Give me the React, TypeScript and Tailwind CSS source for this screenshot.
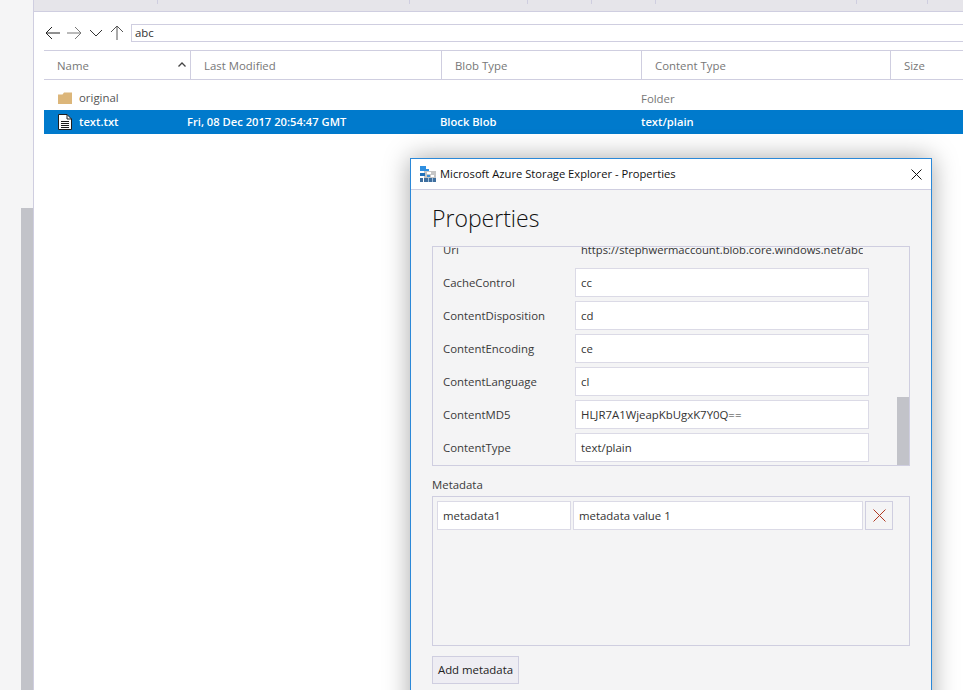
import React from 'react';

const headers = [
  { name: 'Name', width: 'w-[147px]', pad: 'pl-[13px]' },
  { name: 'Last Modified', width: 'w-[251px]', pad: 'pl-[13px]' },
  { name: 'Blob Type', width: 'w-[200px]', pad: 'pl-[13px]' },
  { name: 'Content Type', width: 'w-[249px]', pad: 'pl-[13px]' },
  { name: 'Size', width: 'flex-1', pad: 'pl-[13px]' },
];

const tabStops = ['w-[124px]', 'w-[252px]', 'w-[118px]', 'w-[64px]', 'w-[64px]', 'w-[201px]', 'w-[71px]'];

const props = [
  { label: 'CacheControl', value: 'cc' },
  { label: 'ContentDisposition', value: 'cd' },
  { label: 'ContentEncoding', value: 'ce' },
  { label: 'ContentLanguage', value: 'cl' },
  { label: 'ContentMD5', value: 'HLJR7A1WjeapKbUgxK7Y0Q==' },
  { label: 'ContentType', value: 'text/plain' },
];

const FolderIcon = () => (
  <svg width="14" height="12" viewBox="0 0 14 12">
    <path d="M0 2.5 L0 12 L14 12 L14 0.5 L6 0.5 L4.5 2.5 Z" fill="#dcb67a" />
  </svg>
);

const FileIcon = () => (
  <svg width="14" height="16" viewBox="0 0 14 16" fill="none">
    <path d="M1 .5 H9 L13.5 5 V15.5 H.5 V.5 Z" fill="#fff" stroke="#1e1e1e" />
    <path d="M9 .5 V5 H13.5" stroke="#1e1e1e" />
    <path d="M3 7.5 H11 M3 9.5 H11 M3 11.5 H11 M3 13.5 H11" stroke="#1e1e1e" />
  </svg>
);

const NavIcon = ({ d, color }: { d: string; color: string }) => (
  <svg width="16" height="16" viewBox="0 0 16 16" fill="none" stroke={color} strokeWidth="1">
    <path d={d} />
  </svg>
);

const AppLogo = () => (
  <svg width="16" height="16" viewBox="0 0 16 16">
    <rect x="0" y="0" width="6" height="3" fill="#2f8fe0" />
    <rect x="0" y="3" width="9" height="2" fill="#2f8fe0" />
    <rect x="4" y="5" width="12" height="7" fill="#c6c6c6" />
    <rect x="0" y="7" width="5" height="3" fill="#1f6fb8" />
    <rect x="7" y="6" width="4" height="2" fill="#ffffff" />
    <rect x="7" y="9" width="3" height="2" fill="#3d8fd6" />
    <rect x="11" y="9" width="3" height="2" fill="#ffffff" />
    <rect x="0" y="12" width="16" height="4" fill="#3f6f9f" />
    <rect x="3" y="12" width="1" height="4" fill="#ffffff" />
    <rect x="8" y="12" width="1" height="4" fill="#9fc0dd" />
    <rect x="12" y="12" width="1" height="4" fill="#9fc0dd" />
  </svg>
);

const PropRow = ({ label, value }: { label: string; value: string }) => (
  <div className="flex items-center h-[29px] mb-[4px]">
    <div className="w-[142px] pl-[10px] text-[#3a3a3a]">{label}</div>
    <div className="w-[294px] h-full bg-white border border-[#dbdae6] pl-[5px] flex items-center text-[#333]">{value}</div>
  </div>
);

const Modal = () => (
  <div className="absolute left-[410px] top-[158px] w-[522px] h-[560px] border border-[#2b88d8] bg-[#f4f4f5] shadow-[0_0_24px_rgba(0,0,0,0.35)]">
    <div className="h-[31px] bg-white border-b border-[#cfcee0] flex items-center pl-[9px] pr-[9px] text-[#111]">
      <AppLogo />
      <span className="ml-[4px] text-[11.2px]">Microsoft Azure Storage Explorer - Properties</span>
      <svg className="ml-auto" width="11" height="11" viewBox="0 0 11 11" fill="none" stroke="#111">
        <path d="M.5 .5 L10.5 10.5 M10.5 .5 L.5 10.5" />
      </svg>
    </div>
    <div className="px-[21px]">
      <div className="h-[56px] flex items-center text-[23px] font-light text-[#111]">Properties</div>
      <div className="h-[220px] border border-[#cfcee0] relative overflow-hidden">
        <div className="-mt-[12px]">
          <div className="flex items-center h-[29px] mb-[4px] pt-[1px]">
            <div className="w-[142px] pl-[10px] text-[#3a3a3a]">Uri</div>
            <div className="w-[288px] pl-[6px] overflow-hidden whitespace-nowrap text-[11.2px] text-[#333]">https://stephwermaccount.blob.core.windows.net/abc/text.txt</div>
          </div>
          {props.map((p) => (
            <PropRow key={p.label} label={p.label} value={p.value} />
          ))}
        </div>
        <div className="absolute right-0 bottom-0 w-[12px] h-[68px] bg-[#c2c3c9]" />
      </div>
      <div className="mt-[9px] mb-[1px] h-[20px] flex items-center text-[#3a3a3a]">Metadata</div>
      <div className="h-[150px] border border-[#cfcee0] p-[4px] flex gap-[2px]">
        <div className="w-[134px] h-[29px] bg-white border border-[#dbdae6] pl-[5px] flex items-center text-[#333]">metadata1</div>
        <div className="w-[290px] h-[29px] bg-white border border-[#dbdae6] pl-[5px] flex items-center text-[#333]">metadata value 1</div>
        <div className="w-[28px] h-[29px] border border-[#cfcee0] flex items-center justify-center">
          <svg width="13" height="13" viewBox="0 0 13 13" fill="none" stroke="#b03a22" strokeWidth="1">
            <path d="M.5 .5 L12.5 12.5 M12.5 .5 L.5 12.5" />
          </svg>
        </div>
      </div>
      <div className="mt-[10px] w-[87px] h-[28px] bg-[#eeedf3] border border-[#cfcee0] flex items-center justify-center text-[#222]">Add metadata</div>
    </div>
  </div>
);

export default function App() {
  return (
    <div className="relative w-[963px] h-[690px] overflow-hidden bg-white flex text-[11.4px] font-['Open_Sans',sans-serif]">
      {/* left rail */}
      <div className="w-[34px] h-full bg-[#f5f5f6] border-r border-[#cfcee0] flex justify-end">
        <div className="w-[12px] mt-[208px] bg-[#c2c3c9]" />
      </div>

      <div className="flex-1 min-w-0 flex flex-col">
        {/* tab strip */}
        <div className="h-[12px] bg-[#e6e5ea] border-b border-[#cfcee0] flex">
          {tabStops.map((w, i) => (
            <div key={i} className={`${w} h-[4px] border-r border-[#cfcee0]`} />
          ))}
        </div>

        <div className="pl-[10px]">
          {/* address bar */}
          <div className="h-[38px] flex items-center gap-[5px] pl-[1px] pt-[4px]">
            <NavIcon d="M1 8 H15 M7 2 L1 8 L7 14" color="#222" />
            <NavIcon d="M1 8 H15 M9 2 L15 8 L9 14" color="#777" />
            <span className="ml-[1px]">
              <NavIcon d="M2 5 L8 11 L14 5" color="#333" />
            </span>
            <NavIcon d="M8 15 V1 M2 7 L8 1 L14 7" color="#555" />
            <div className="flex-1 ml-[1px] h-[18px] bg-white border border-[#cfcee0] border-r-0 pl-[3px] flex items-center text-[#333]">abc</div>
          </div>

          {/* column headers */}
          <div className="h-[30px] border-y border-[#cfcee0] flex text-[#777]">
            {headers.map((h, i) => (
              <div key={h.name} className={`${h.width} ${h.pad} pt-[1px] relative flex items-center ${i < 4 ? 'border-r border-[#cfcee0]' : ''}`}>
                {h.name}
                {i === 0 && (
                  <svg className="absolute right-[4px] top-[11px]" width="8" height="5" viewBox="0 0 8 5" fill="none" stroke="#444" strokeWidth="1.3">
                    <path d="M.5 4.5 L4 1 L7.5 4.5" />
                  </svg>
                )}
              </div>
            ))}
          </div>

          {/* rows */}
          <div className="pt-[6px]">
            <div className="h-[24px] flex items-center text-[#555]">
              <div className="w-[143px] pl-[14px] flex items-center gap-[7px]">
                <FolderIcon />
                <span>original</span>
              </div>
              <div className="w-[253px]" />
              <div className="w-[201px]" />
              <div className="text-[#777] pt-[2px]">Folder</div>
            </div>
            <div className="h-[24px] flex items-center bg-[#007acc] text-white font-semibold text-[11.2px]">
              <div className="w-[143px] pl-[14px] flex items-center gap-[7px]">
                <FileIcon />
                <span>text.txt</span>
              </div>
              <div className="w-[253px]">Fri, 08 Dec 2017 20:54:47 GMT</div>
              <div className="w-[201px]">Block Blob</div>
              <div>text/plain</div>
            </div>
          </div>
        </div>
      </div>

      <Modal />
    </div>
  );
}
